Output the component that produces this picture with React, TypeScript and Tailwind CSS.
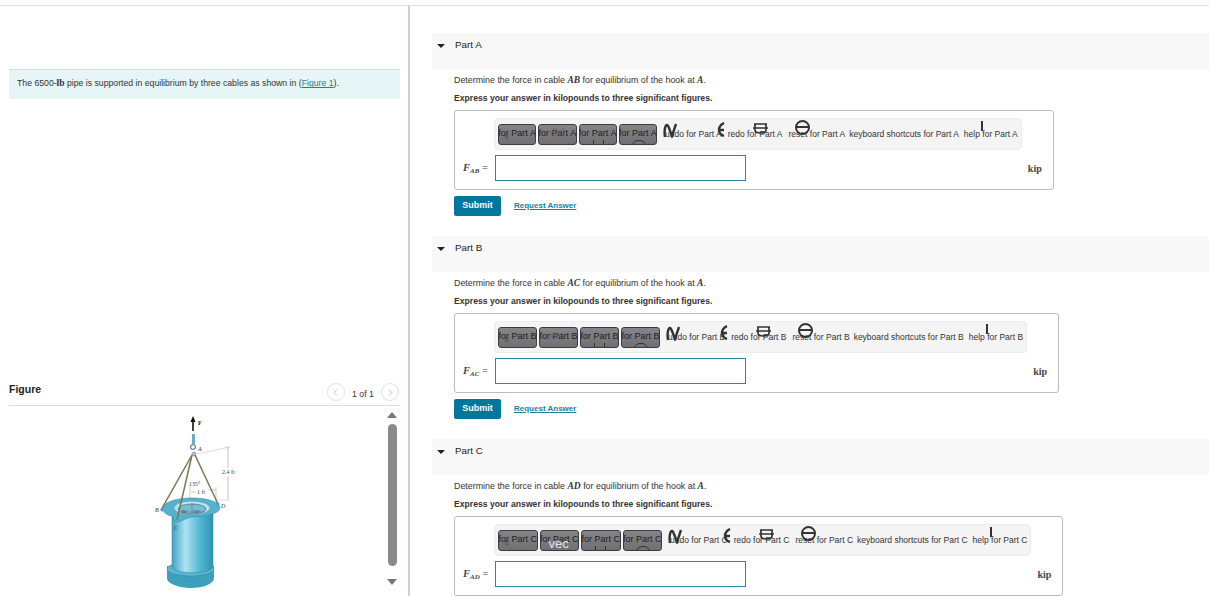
import { ChevronLeft, ChevronRight } from "lucide-react";

type PartProps = {
  name: string;
  cable: string;
  sub: string;
  glyphs: [string, string];
  btnWidth: string;
  big?: boolean;
};

const serif = "font-['Liberation_Serif',serif]";

function PipeFigure() {
  const labelFont = "Liberation Serif, serif";
  return (
    <svg width="150" height="191" viewBox="0 0 150 191" className="block">
      <defs>
        <linearGradient id="body" x1="0" x2="1" y1="0" y2="0">
          <stop offset="0" stopColor="#3fa3c4" />
          <stop offset="0.33" stopColor="#aee3ef" />
          <stop offset="0.7" stopColor="#4cb5d2" />
          <stop offset="1" stopColor="#2f93b4" />
        </linearGradient>
      </defs>
      <path d="M63 25V15" stroke="#111" strokeWidth="1.6" />
      <path d="M60.5 16L63 10L65.5 16Z" fill="#111" />
      <text x="68" y="19" fontSize="6" fontWeight="700" fontFamily={labelFont} fill="#222">F</text>
      <rect x="62" y="28" width="3" height="10" fill="#6fa9bd" />
      <circle cx="63" cy="41" r="2.4" fill="none" stroke="#6d8792" strokeWidth="1.2" />
      <circle cx="64" cy="48" r="2" fill="#a9c6cf" stroke="#6d8792" strokeWidth="0.6" />
      <text x="68" y="45" fontSize="6" fontStyle="italic" fontFamily={labelFont} fill="#333">A</text>
      <path d="M67 48L100 41H94M88 94H100" stroke="#bbb" strokeWidth="0.5" fill="none" />
      <path d="M98 42V62M98 70V93" stroke="#888" strokeWidth="0.5" />
      <text x="92" y="68" fontSize="6" fontFamily={labelFont} fill="#444">2.4 ft</text>
      <text x="59" y="80" fontSize="6" fontFamily={labelFont} fill="#444">135°</text>
      <text x="67" y="88" fontSize="6" fontFamily={labelFont} fill="#444">1 ft</text>
      <path d="M61 86H66M78 84H86M86 81V96M60 78V100" stroke="#999" strokeWidth="0.5" fill="none" />
      <path d="M37 160V172C37 178 50 182 61 182C73 182 84 178 84 172V160Z" fill="#3d9fbe" />
      <ellipse cx="60.5" cy="163" rx="23.5" ry="7" fill="#5cb5cf" stroke="#2a84a3" strokeWidth="0.5" />
      <path d="M42 108V160C42 169 83 169 83 160V104Z" fill="url(#body)" stroke="#2b86a6" strokeWidth="0.5" />
      <path d="M33 103C33 96 46 92 62 92C78 92 90 96 90 102C90 108 72 111 62 111C56 112 50 116 47 116C44 116 44 112 42 110C36 109 33 106 33 103Z" fill="#55b3cf" stroke="#2a84a3" strokeWidth="0.5" />
      <ellipse cx="62" cy="102" rx="18" ry="7" fill="#bfe3ec" stroke="#5b8fa0" strokeWidth="0.6" />
      <ellipse cx="62" cy="103" rx="14" ry="5" fill="#75bdd2" stroke="#33606f" strokeWidth="0.6" />
      <path d="M62 97V108M50 106H74" stroke="#555" strokeWidth="0.4" />
      <text x="52" y="107" fontSize="4" fontFamily={labelFont} fill="#333">90°</text>
      <text x="63" y="107" fontSize="4" fontFamily={labelFont} fill="#333">120°</text>
      <path d="M62 49L31 104M62 49L47 114M65 49L88 98" stroke="#7f7456" strokeWidth="1.5" fill="none" />
      <circle cx="32" cy="104" r="1.4" fill="#3d9fbe" />
      <circle cx="88" cy="98" r="1.4" fill="#3d9fbe" />
      <text x="25" y="106" fontSize="6" fontStyle="italic" fontFamily={labelFont} fill="#333">B</text>
      <text x="44" y="124" fontSize="6" fontStyle="italic" fontFamily={labelFont} fill="#333">C</text>
      <text x="91" y="102" fontSize="6" fontStyle="italic" fontFamily={labelFont} fill="#333">D</text>
    </svg>
  );
}

function ToolButton({ name, width, children }: { name: string; width: string; children?: React.ReactNode }) {
  return (
    <span className={`relative flex h-[21px] shrink-0 items-center justify-center overflow-hidden rounded-[3px] border border-[#3c3c3e] bg-gradient-to-b from-[#858589] to-[#707074] text-[9px] whitespace-nowrap text-[#1c1c1c] ${width}`}>
      for Part {name}
      {children}
    </span>
  );
}

function Part({ name, cable, sub, glyphs, btnWidth, big }: PartProps) {
  return (
    <section className="h-[203px]">
      <div className="flex h-[36px] items-start bg-[#f8f8f8] pt-[6px] pl-[5px]">
        <span className="mt-[5px] h-0 w-0 border-x-[4px] border-t-[4px] border-x-transparent border-t-[#222]" />
        <span className="ml-[10px] text-[9.8px] leading-3 text-[#222]">Part {name}</span>
      </div>
      <div className="pl-[22px]">
        <p className="mt-[5px] text-[8.9px] leading-3 text-[#333]">
          Determine the force in cable <i className={`font-bold text-[9.5px] ${serif}`}>{cable}</i> for equilibrium of the hook at <i className={`font-bold text-[9.5px] ${serif}`}>A</i>.
        </p>
        <p className="mt-[6px] text-[8.65px] leading-3 font-bold text-[#333]">
          Express your answer in kilopounds to three significant figures.
        </p>
        <div className="mt-[6px] inline-flex h-[80px] flex-col rounded-[3px] border border-[#bdbdbd] pr-[31px] pl-[39px]">
          <div className="mt-[7px] flex h-[32px] items-center rounded-[4px] border border-[#ececec] bg-[#f4f4f4] pr-[3px] pl-[3px] text-[8.5px] whitespace-nowrap text-[#333]">
            <div className="flex gap-[2px]">
              <ToolButton name={name} width={btnWidth}>
                <span className={`absolute top-[2px] left-[6px] text-[11px] text-[#4c4c4c] ${serif}`}>{glyphs[0]}</span>
              </ToolButton>
              <ToolButton name={name} width={btnWidth}>
                <span className={big ? "absolute top-[3px] left-[8px] text-[13px] text-[#e4e4e4]" : "absolute top-[1px] left-[10px] text-[9px] text-[#5c5c5c]"}>{glyphs[1]}</span>
              </ToolButton>
              <ToolButton name={name} width={btnWidth}>
                <span className="absolute top-[15px] left-[13px] h-[8px] w-[11px] border-x border-[#333]" />
              </ToolButton>
              <ToolButton name={name} width={btnWidth}>
                <span className="absolute top-[15px] left-[12px] h-[12px] w-[14px] rounded-full border border-[#333]" />
              </ToolButton>
            </div>
            <span className="relative ml-[8px]">
              undo for Part {name}
              <svg width="15" height="15" viewBox="0 0 15 15" className="absolute -top-[5px] -left-[2px]" fill="none" stroke="#333" strokeWidth="2.4">
                <path d="M2 14C1 8 2 2 4 2C5 2 5 3 6 5L9 13L13 1" />
              </svg>
            </span>
            <span className="relative ml-[6px]">
              <svg width="9" height="15" viewBox="0 0 9 15" className="absolute -top-[6px] -left-[11px]" fill="none" stroke="#333" strokeWidth="2.4">
                <path d="M7 1C3 3 2 6 2 8C2 11 4 13 7 14M2 8H7" />
              </svg>
              redo for Part {name}
              <svg width="15" height="13" viewBox="0 0 15 13" className="absolute -top-[6px] left-[25px]" fill="none" stroke="#333" strokeWidth="1.7">
                <path d="M1 2H14M2 2V8C2 12 13 12 13 8V2M0 6H15" />
              </svg>
            </span>
            <span className="relative ml-[6px]">
              <span className="absolute -top-[8px] left-[6px] h-[15px] w-[15px] rounded-full border-[2px] border-[#333]">
                <span className="absolute top-[4px] left-0 h-[2px] w-full bg-[#333]" />
              </span>
              reset for Part {name}
            </span>
            <span className="ml-[4px]">keyboard shortcuts for Part {name}</span>
            <span className="relative ml-[5px]">
              <span className="absolute -top-[7px] left-[17px] h-[10px] w-[2px] bg-[#333]" />
              help for Part {name}
            </span>
          </div>
          <div className="mt-[5px] flex items-center">
            <span className={`absolute ml-[-31px] text-[10.5px] font-bold text-[#444] italic ${serif}`}>
              F<sub className="text-[7px]">{sub}</sub> <span className="font-normal not-italic">=</span>
            </span>
            <span className="ml-[1px] h-[26px] w-[251px] border border-[#2a86a3] bg-white" />
            <span className="grow" />
            <span className={`mr-[-20px] text-[10px] font-bold text-[#444] ${serif}`}>kip</span>
          </div>
        </div>
        <div className="mt-[6px] flex items-center">
          <span className="flex h-[20px] w-[47px] items-center justify-center rounded-[2px] bg-[#00779b] text-[9px] font-bold text-white">Submit</span>
          <a className="ml-[13px] text-[8px] font-bold text-[#1c7f9d] underline">Request Answer</a>
        </div>
      </div>
    </section>
  );
}

export default function App() {
  return (
    <div className="h-[596px] w-[1209px] overflow-hidden bg-white font-['Liberation_Sans',Arial,sans-serif]">
      <div className="mt-[5px] flex h-[591px] border-t border-[#e2e2e2]">
        <aside className="h-full w-[410px] shrink-0 border-r-2 border-[#c5d3e0] pt-[63px] pl-[9px]">
          <div className="flex h-[30px] w-[391px] items-center border-t border-[#dcdcdc] bg-[#e6f5f6] pb-[2px] pl-[8px] text-[8.7px] text-[#333]">
            <span>
              The 6500-<b className={`text-[9.5px] ${serif}`}>lb</b> pipe is supported in equilibrium by three cables as shown in (<a className="text-[#1c7f9d] underline">Figure 1</a>).
            </span>
          </div>
          <div className="mt-[278px] flex h-[29px] w-[391px] items-center border-b border-[#dedede]">
            <span className="mb-[2px] text-[10.5px] font-bold text-[#222]">Figure</span>
            <span className="grow" />
            <span className="mt-[2px] flex h-[18px] w-[18px] items-center justify-center rounded-full border border-[#e2e2e2] text-[#bbbbbb]">
              <ChevronLeft size={11} />
            </span>
            <span className="mx-[7px] mt-[7px] text-[8.8px] text-[#333]">1 of 1</span>
            <span className="mt-[2px] mr-[1px] flex h-[18px] w-[18px] items-center justify-center rounded-full border border-[#e2e2e2] text-[#bbbbbb]">
              <ChevronRight size={11} />
            </span>
          </div>
          <div className="flex w-[391px] justify-between">
            <div className="ml-[121px]">
              <PipeFigure />
            </div>
            <div className="mr-[3px] flex w-[10px] flex-col items-center pt-[6px]">
              <span className="h-0 w-0 border-x-[5px] border-b-[6px] border-x-transparent border-b-[#777]" />
              <span className="mt-[6px] h-[142px] w-[9px] rounded-full bg-[#8a8a8a]" />
              <span className="mt-[13px] h-0 w-0 border-x-[5px] border-t-[6px] border-x-transparent border-t-[#777]" />
            </div>
          </div>
        </aside>
        <main className="min-w-0 grow pt-[27px] pl-[22px]">
          <Part name="A" cable="AB" sub="AB" glyphs={["ϵ", "√(x)"]} btnWidth="w-[38.25px]" />
          <Part name="B" cable="AC" sub="AC" glyphs={["ε", "vec"]} btnWidth="w-[39px]" />
          <Part name="C" cable="AD" sub="AD" glyphs={["ε", "vec"]} btnWidth="w-[39.5px]" big />
        </main>
      </div>
    </div>
  );
}
